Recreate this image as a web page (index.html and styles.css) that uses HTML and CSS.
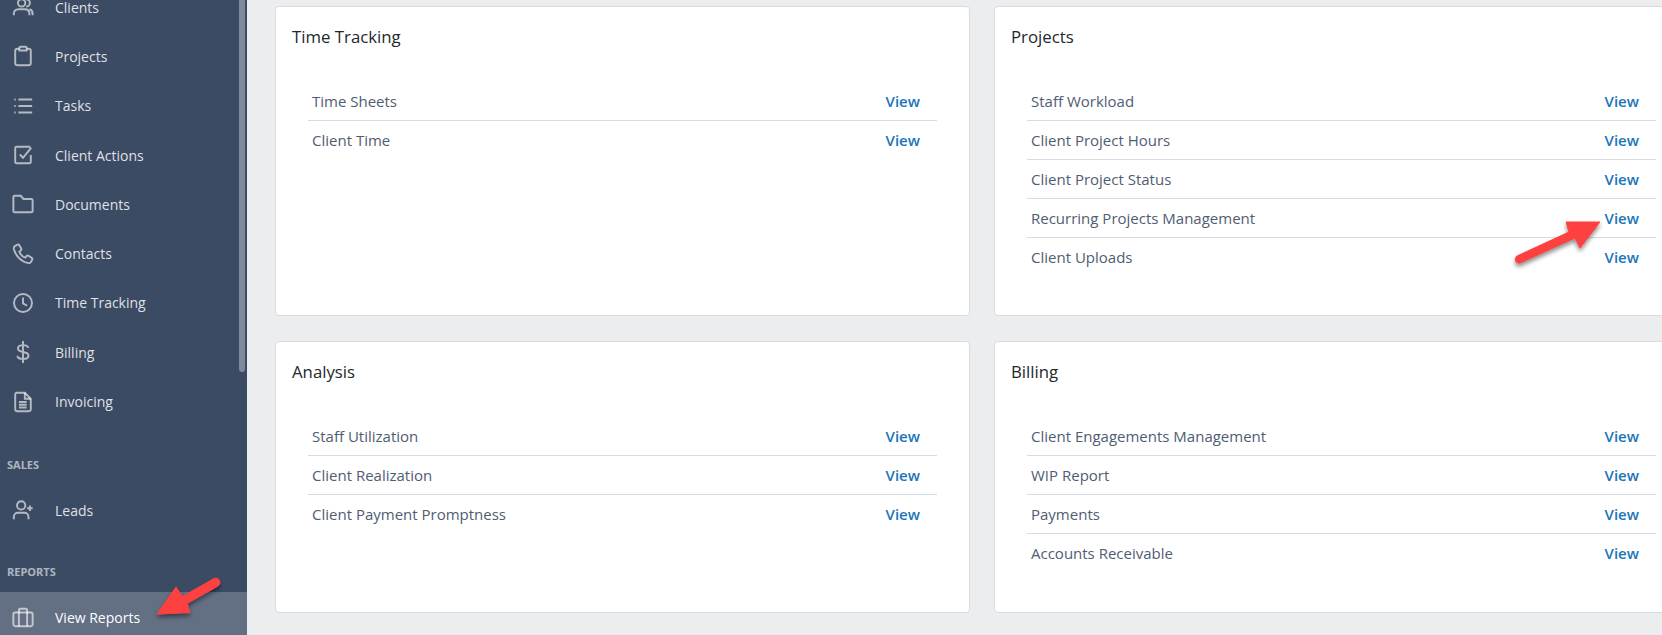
FILE: index.html
```html
<!DOCTYPE html>
<html lang="en">
<head>
<meta charset="utf-8">
<title>Reports</title>
<link rel="stylesheet" href="styles.css">
</head>
<body>
<div class="app">
  <aside class="sidebar">
    <nav class="nav">
      <a class="item"><svg class="ico" viewBox="0 0 24 24"><circle cx="10.500" cy="7.500" r="4"/><path d="M2 21v-1.500c0-3 2-5 5-5h7c3 0 5 2 5 5V21"/><path d="M15.500 3.500a4 4 0 0 1 0 8M19 14.500c2 .5 3.500 2.500 3.500 5V21"/></svg><span>Clients</span></a>
      <a class="item"><svg class="ico" viewBox="0 0 24 24"><path d="M8 4H6C4.500 4 3.500 5 3.500 6.500v13C3.500 21 4.500 22 6 22h12c1.500 0 2.500-1 2.500-2.500v-13C20.500 5 19.500 4 18 4h-2"/><path d="M8 6V3.500C8 2.500 8.500 2 9.500 2h5c1 0 1.500.5 1.500 1.500V6z"/></svg><span>Projects</span></a>
      <a class="item"><svg class="ico" viewBox="0 0 24 24"><path d="M7 5h15M7 12h15M7 19h15M2.500 5h1.500M2.500 12h1.500M2.500 19h1.500"/></svg><span>Tasks</span></a>
      <a class="item"><svg class="ico" viewBox="0 0 24 24"><path d="M20 3H5C4 3 3.500 3.500 3.500 4.500v15c0 1 .5 1.500 1.500 1.500h14c1 0 1.500-.5 1.500-1.500V12"/><path d="M8.500 11.500l3.500 3.500 9-11"/></svg><span>Client Actions</span></a>
      <a class="item"><svg class="ico" viewBox="0 0 24 24"><path d="M1.500 19.500v-15C1.500 3.500 2 3 3 3h6.500l3 3.500H21c1 0 1.500.5 1.500 1.500v11.500c0 1-.5 1.500-1.500 1.500H3c-1 0-1.500-.5-1.500-1.500z"/></svg><span>Documents</span></a>
      <a class="item"><svg class="ico" viewBox="0 0 24 24"><path d="M3 3.500L6 1.800c.8-.4 1.500-.2 2 .6l2 3.600c.4.8.3 1.500-.4 2L8 9.500c1 2.800 3.500 5.500 6.500 6.500l1.500-1.800c.6-.6 1.300-.7 2-.3l3.500 2.300c.7.5.9 1.200.5 2L20.500 21c-.6.8-1.500 1.200-2.500 1-8-1.500-14-8-16-15.500C1.800 5.300 2.200 4.200 3 3.500z"/></svg><span>Contacts</span></a>
      <a class="item"><svg class="ico" viewBox="0 0 24 24"><circle cx="12" cy="12" r="9.800"/><path d="M12 6v6.500l4.500 2.500"/></svg><span>Time Tracking</span></a>
      <a class="item"><svg class="ico" viewBox="0 0 24 24"><path d="M17.500 7.500C17.500 5.500 15.500 4.500 12 4.500S6.500 6 6.500 8c0 2.500 2 3.500 5.500 4s6 1.500 6 4-2.500 3.500-6 3.500-6-1-6-3.500M12 0v24"/></svg><span>Billing</span></a>
      <a class="item"><svg class="ico" viewBox="0 0 24 24"><path d="M3.500 4c0-1.300.7-2 2-2H14l6.500 6.500V20c0 1.300-.7 2-2 2h-13c-1.300 0-2-.7-2-2z"/><path d="M14 2v6.500h6.500M7.500 12H16M7.500 15H16M7.500 18H16"/></svg><span>Invoicing</span></a>
      <h3 class="head head-sales">SALES</h3>
      <a class="item"><svg class="ico" viewBox="0 0 24 24"><circle cx="10" cy="7" r="4.500"/><path d="M2 22v-2.500c0-2.500 2-4.500 4.500-4.500h7c2.500 0 4.500 2 4.500 4.500V22M19.500 7v6M16.500 10h6"/></svg><span>Leads</span></a>
      <h3 class="head head-reports">REPORTS</h3>
      <a class="item active"><svg class="ico" viewBox="0 0 24 24"><rect x="1.500" y="7" width="21" height="15" rx="2"/><path d="M7.500 22V4.500c0-1 .5-1.500 1.500-1.500h6c1 0 1.500.5 1.500 1.500V22"/></svg><span>View Reports</span></a>
    </nav>
    <div class="thumb"></div>
  </aside>
  <main class="main">
    <section class="card">
      <h2 class="title">Time Tracking</h2>
      <ul class="rows">
        <li class="row"><span>Time Sheets</span><a class="view">View</a></li>
        <li class="row"><span>Client Time</span><a class="view">View</a></li>
      </ul>
    </section>
    <section class="card">
      <h2 class="title">Projects</h2>
      <ul class="rows">
        <li class="row"><span>Staff Workload</span><a class="view">View</a></li>
        <li class="row"><span>Client Project Hours</span><a class="view">View</a></li>
        <li class="row"><span>Client Project Status</span><a class="view">View</a></li>
        <li class="row"><span>Recurring Projects Management</span><a class="view">View</a></li>
        <li class="row"><span>Client Uploads</span><a class="view">View</a></li>
      </ul>
    </section>
    <section class="card">
      <h2 class="title">Analysis</h2>
      <ul class="rows">
        <li class="row"><span>Staff Utilization</span><a class="view">View</a></li>
        <li class="row"><span>Client Realization</span><a class="view">View</a></li>
        <li class="row"><span>Client Payment Promptness</span><a class="view">View</a></li>
      </ul>
    </section>
    <section class="card">
      <h2 class="title">Billing</h2>
      <ul class="rows">
        <li class="row"><span>Client Engagements Management</span><a class="view">View</a></li>
        <li class="row"><span>WIP Report</span><a class="view">View</a></li>
        <li class="row"><span>Payments</span><a class="view">View</a></li>
        <li class="row"><span>Accounts Receivable</span><a class="view">View</a></li>
      </ul>
    </section>
  </main>
</div>
<svg class="arrows" viewBox="0 0 1662 635" aria-hidden="true">
  <defs><filter id="sh" x="-30%" y="-30%" width="160%" height="160%"><feDropShadow dx="0" dy="3" stdDeviation="2" flood-color="#000" flood-opacity=".45"/></filter></defs>
  <g filter="url(#sh)" fill="#fd4040" stroke="#fd4040" stroke-linejoin="round">
    <path d="M157 614l19-27 6.500 9.500 31.500-18c4.500-2 8.500 4 4 7.500l-31 17.500 3 9z"/>
    <path d="M1600 222l-20 26-5-10-55 25c-4 1-6.500-4-3-7l52-24-3-10z"/>
  </g>
</svg>
</body>
</html>
```
FILE: styles.css
```css
* { box-sizing: border-box; }
html, body { margin: 0; height: 100%; overflow: hidden; }
body {
  width: 1662px;
  height: 635px;
  background: #ebedef;
  font-family: "Open Sans", "Liberation Sans", sans-serif;
  font-size: 15px;
  color: #4f5d73;
}
.app { display: flex; width: 1662px; height: 635px; overflow: hidden; }
.sidebar {
  position: relative;
  flex: 0 0 247px;
  height: 635px;
  background: #3c4b64;
  overflow: hidden;
  font-size: 14px;
}
.nav { display: flex; flex-direction: column; margin-top: -17.500px; }
.item {
  display: flex;
  align-items: center;
  height: 49.300px;
  flex: none;
  padding-left: 12px;
  color: rgba(255, 255, 255, .85);
}
.item span { margin-left: 21px; }
.item.active { background: #636f83; color: #fff; }
.ico {
  width: 22px;
  height: 22px;
  flex: none;
  fill: none;
  stroke: rgba(255, 255, 255, .62);
  stroke-width: 2.100;
}
.head {
  margin: 0;
  padding-left: 7px;
  font-size: 11px;
  font-weight: 700;
  line-height: 15px;
  color: rgba(255, 255, 255, .6);
}
.head-sales { margin-top: 30.500px; margin-bottom: 14px; }
.head-reports { margin-top: 29px; margin-bottom: 13.500px; }
.thumb {
  position: absolute;
  top: 0;
  right: 2px;
  width: 6px;
  height: 372px;
  border-radius: 0 0 3px 3px;
  background: #7f8999;
}
.main {
  flex: none;
  display: grid;
  grid-template-columns: 695px 695px;
  grid-template-rows: 310px 272px;
  gap: 25px 24px;
  margin: 6px 0 0 28px;
}
.card {
  background: #fff;
  border: 1px solid #d8dbe0;
  border-radius: 4px;
  padding: 18px 32px 0 16px;
}
.title {
  margin: 0;
  font-size: 16.800px;
  font-weight: 400;
  line-height: 24px;
  color: #23282c;
}
.rows { list-style: none; margin: 33px 0 0 16px; padding: 0; }
.row {
  display: flex;
  justify-content: space-between;
  align-items: center;
  height: 39px;
  padding: 0 17px 0 4px;
  border-bottom: 1px solid #d8dbe0;
}
.row:last-child { border-bottom-color: transparent; }
.view { color: #1b75bb; font-weight: 600; }
.arrows {
  position: absolute;
  left: 0;
  top: 0;
  width: 1662px;
  height: 635px;
  pointer-events: none;
}
```
